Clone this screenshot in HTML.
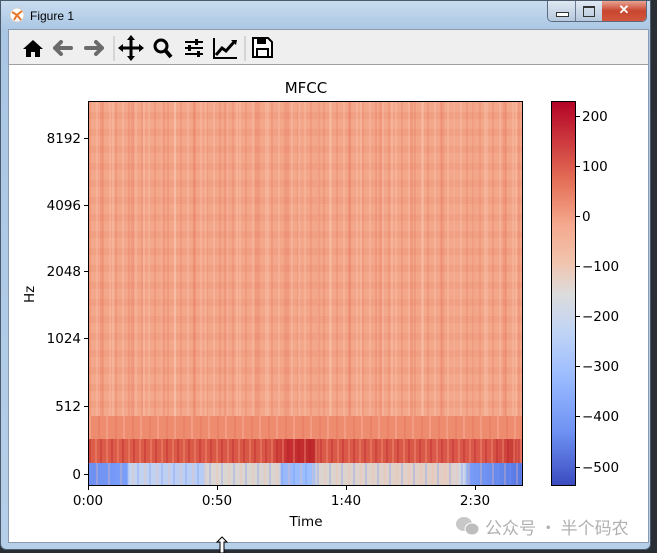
<!DOCTYPE html>
<html><head><meta charset="utf-8"><style>
body{margin:0;width:657px;height:553px;overflow:hidden;background:#2a2f35;font-family:"DejaVu Sans","Liberation Sans",sans-serif;position:relative}
.win{position:absolute;left:0;top:0;width:651px;height:550px;background:linear-gradient(180deg,#c9dcef,#a9c6e4 30px,#b6cfe9);border-radius:0 0 6px 6px;border:1px solid #4a5a6a;box-sizing:border-box}
.title{position:absolute;left:29px;top:8px;font:12px "Liberation Sans",sans-serif;color:#000}
.client{position:absolute;left:8px;top:29px;width:641px;height:514px;background:#fff;border:1px solid #8a9bb0;box-sizing:border-box}
.tb{position:absolute;left:0;top:0;width:639px;height:34px;background:#efefef;border-bottom:1px solid #a0a0a0}
.abs{position:absolute}
.yt{position:absolute;font-size:13.5px;right:576px;text-align:right}
.tick{position:absolute;background:#000}
.xt{position:absolute;font-size:13.5px;top:493px;width:60px;text-align:center}
.ct{position:absolute;font-size:13.5px;left:582px}
</style></head><body>
<div class="win">
<svg class="abs" style="left:8px;top:6px" width="16" height="16"><circle cx="8" cy="8" r="7" fill="#fff" stroke="#ccc"/><path d="M3 5l5 3-3 5M8 8l5-4M8 8l4 5" stroke="#e8732a" stroke-width="2" fill="none"/></svg>
<div class="title">Figure 1</div>
<div class="abs" style="left:546px;top:0;width:98px;height:20px;border-radius:0 0 5px 5px;overflow:hidden;border:1px solid #5a6b80;border-top:none">
<div class="abs" style="left:0;top:0;width:27px;height:20px;background:linear-gradient(#dfe8f3,#b7c8dd)"><div class="abs" style="left:8px;top:11px;width:11px;height:3px;border:1px solid #333;background:#fff"></div></div>
<div class="abs" style="left:27px;top:0;width:26px;height:20px;background:linear-gradient(#dfe8f3,#b7c8dd);border-left:1px solid #6a7a90"><div class="abs" style="left:7px;top:5px;width:10px;height:8px;border:1px solid #333;border-top-width:2px"></div></div>
<div class="abs" style="left:54px;top:0;width:44px;height:20px;background:linear-gradient(#e9a493,#c8452f 50%,#d3563c)"><div class="abs" style="left:0;width:44px;top:1px;text-align:center;color:#fff;font:bold 13px 'Liberation Sans'">✕</div></div>
</div>
</div>
<div class="client">
<div class="tb">
<svg class="abs" style="left:0;top:0" width="300" height="34">
<g fill="#000"><path d="M14 19 L24 10 L34 19 L31 19 L31 27 L26 27 L26 22 L22 22 L22 27 L17 27 L17 19Z"/></g>
<path d="M46 18h16M46 18l6-6M46 18l6 6" stroke="#6b6b6b" stroke-width="4" fill="none" stroke-linecap="round"/>
<path d="M93 18h-16M93 18l-6-6M93 18l-6 6" stroke="#6b6b6b" stroke-width="4" fill="none" stroke-linecap="round"/>
<line x1="105" y1="6" x2="105" y2="31" stroke="#bbb"/>
<path d="M122 7v22M111 18h22" stroke="#000" stroke-width="3"/><path d="M122 5l-4 5h8zM122 31l-4-5h8zM109 18l5-4v8zM135 18l-5-4v8z" fill="#000"/>
<circle cx="152" cy="16" r="6" stroke="#000" stroke-width="3" fill="none"/><path d="M156 20l6 7" stroke="#000" stroke-width="4"/>
<path d="M176 12h18M176 18h18M176 24h18" stroke="#000" stroke-width="2"/><rect x="186" y="9" width="3" height="6" fill="#000"/><rect x="179" y="15" width="3" height="6" fill="#000"/><rect x="188" y="21" width="3" height="6" fill="#000"/>
<path d="M205 8v20h23" stroke="#000" stroke-width="2" fill="none"/><path d="M207 25l6-7 4 3 8-9" stroke="#000" stroke-width="3" fill="none"/><path d="M228 10l-6 0 5 5z" fill="#000"/>
<line x1="236" y1="6" x2="236" y2="31" stroke="#bbb"/>
<path d="M244 8h15l4 4v15h-19z" stroke="#000" stroke-width="2" fill="#fff"/><rect x="248" y="8" width="9" height="6" fill="#000"/><rect x="248" y="19" width="11" height="8" stroke="#000" stroke-width="2" fill="none"/>
</svg>
</div>
</div>
<div class="abs" style="left:0;top:79px;width:612px;text-align:center;font-size:15px">MFCC</div>
<!-- heatmap -->
<div class="abs" style="left:88px;top:101px;width:435px;height:385px;border:1px solid #000;box-sizing:border-box;overflow:hidden;background:#f3a88c">
<div class="abs" style="left:0;top:0;width:435px;height:314px;background:repeating-linear-gradient(180deg,rgba(255,255,255,0) 0 10px,rgba(230,120,90,.18) 10px 17px)"></div>
<div class="abs" style="left:0;top:0;width:435px;height:314px;background:repeating-linear-gradient(90deg,rgba(230,110,80,.22) 0 2px,transparent 2px 7px,rgba(255,210,190,.25) 7px 9px,transparent 9px 13px)"></div>
<div class="abs" style="left:0;top:0;width:435px;height:314px;background:repeating-linear-gradient(90deg,transparent 0 11px,rgba(225,100,75,.2) 11px 14px,transparent 14px 23px,rgba(255,220,200,.25) 23px 25px,transparent 25px 31px)"></div>
<div class="abs" style="left:0;top:314px;width:435px;height:23px;background:#ee8c70"></div>
<div class="abs" style="left:0;top:314px;width:435px;height:23px;background:repeating-linear-gradient(90deg,rgba(255,200,180,.3) 0 2px,transparent 2px 9px,rgba(215,90,70,.2) 9px 11px,transparent 11px 17px)"></div>
<div class="abs" style="left:0;top:337px;width:435px;height:24px;background:linear-gradient(90deg,#dc5d4a,#d85746 180px,#c42e30 200px,#bf2a2d 225px,#d95a48 230px,#d9584a 400px,#c93b36 425px,#ef8c70)"></div>
<div class="abs" style="left:0;top:337px;width:435px;height:24px;background:repeating-linear-gradient(90deg,rgba(180,20,40,.3) 0 2px,transparent 2px 6px,rgba(250,160,130,.35) 6px 8px,transparent 8px 11px)"></div>
<div class="abs" style="left:0;top:361px;width:435px;height:24px;background:linear-gradient(90deg,#6c8ff0 0,#7b9ff9 38px,#c4d3f0 40px,#b8cdf5 115px,#dcd6d2 118px,#d9d4d0 190px,#98b8fc 193px,#9ec0ff 225px,#dcd4cf 228px,#e2cec4 360px,#d0d8e8 375px,#7a9ef8 380px,#5677e3 433px)"></div>
<div class="abs" style="left:0;top:361px;width:435px;height:24px;background:repeating-linear-gradient(90deg,rgba(110,150,250,.3) 0 2px,transparent 2px 7px,rgba(245,190,170,.3) 7px 9px,transparent 9px 12px)"></div>
</div>
<!-- y ticks -->
<div class="tick" style="left:84px;top:138px;width:4px;height:1px"></div><div class="yt" style="top:131px">8192</div>
<div class="tick" style="left:84px;top:205px;width:4px;height:1px"></div><div class="yt" style="top:198px">4096</div>
<div class="tick" style="left:84px;top:271px;width:4px;height:1px"></div><div class="yt" style="top:264px">2048</div>
<div class="tick" style="left:84px;top:338px;width:4px;height:1px"></div><div class="yt" style="top:331px">1024</div>
<div class="tick" style="left:84px;top:406px;width:4px;height:1px"></div><div class="yt" style="top:399px">512</div>
<div class="tick" style="left:84px;top:474px;width:4px;height:1px"></div><div class="yt" style="top:467px">0</div>
<div class="abs" style="left:22px;top:303px;font-size:13.5px;transform:rotate(-90deg);transform-origin:left top">Hz</div>
<!-- x ticks -->
<div class="tick" style="left:88px;top:486px;width:1px;height:4px"></div><div class="xt" style="left:58px">0:00</div>
<div class="tick" style="left:217px;top:486px;width:1px;height:4px"></div><div class="xt" style="left:187px">0:50</div>
<div class="tick" style="left:346px;top:486px;width:1px;height:4px"></div><div class="xt" style="left:316px">1:40</div>
<div class="tick" style="left:475px;top:486px;width:1px;height:4px"></div><div class="xt" style="left:445px">2:30</div>
<div class="abs" style="left:276px;top:514px;width:60px;text-align:center;font-size:13.5px">Time</div>
<!-- colorbar -->
<div class="abs" style="left:551px;top:101px;width:25px;height:385px;border:1px solid #000;box-sizing:border-box;background:linear-gradient(180deg,#b40426,#e36c55 20%,#f4a98e 32%,#f1c4ae 42%,#dddcdc 50%,#c0d4f5 60%,#9abbff 72%,#6f92f3 86%,#3b4cc0)"></div>
<div class="tick" style="left:576px;top:116px;width:4px;height:1px"></div><div class="ct" style="top:109px">200</div>
<div class="tick" style="left:576px;top:166px;width:4px;height:1px"></div><div class="ct" style="top:159px">100</div>
<div class="tick" style="left:576px;top:216px;width:4px;height:1px"></div><div class="ct" style="top:209px">0</div>
<div class="tick" style="left:576px;top:266px;width:4px;height:1px"></div><div class="ct" style="top:259px">−100</div>
<div class="tick" style="left:576px;top:316px;width:4px;height:1px"></div><div class="ct" style="top:309px">−200</div>
<div class="tick" style="left:576px;top:366px;width:4px;height:1px"></div><div class="ct" style="top:359px">−300</div>
<div class="tick" style="left:576px;top:416px;width:4px;height:1px"></div><div class="ct" style="top:409px">−400</div>
<div class="tick" style="left:576px;top:467px;width:4px;height:1px"></div><div class="ct" style="top:460px">−500</div>
<!-- watermark -->
<svg class="abs" style="left:455px;top:515px" width="26" height="22"><ellipse cx="9" cy="9" rx="8" ry="7" fill="#c8c8c8"/><ellipse cx="17" cy="14" rx="7" ry="6" fill="#bdbdbd" stroke="#fff"/></svg>
<div class="abs" style="left:485px;top:514px;font:17px 'Noto Sans CJK SC',sans-serif;color:#b0b0b0">公众号 · 半个码农</div>
<svg class="abs" style="left:216px;top:536px" width="12" height="17"><path d="M6 1l5 5h-3v11h-4v-11h-3z" fill="#fff" stroke="#000"/></svg>
</body></html>
